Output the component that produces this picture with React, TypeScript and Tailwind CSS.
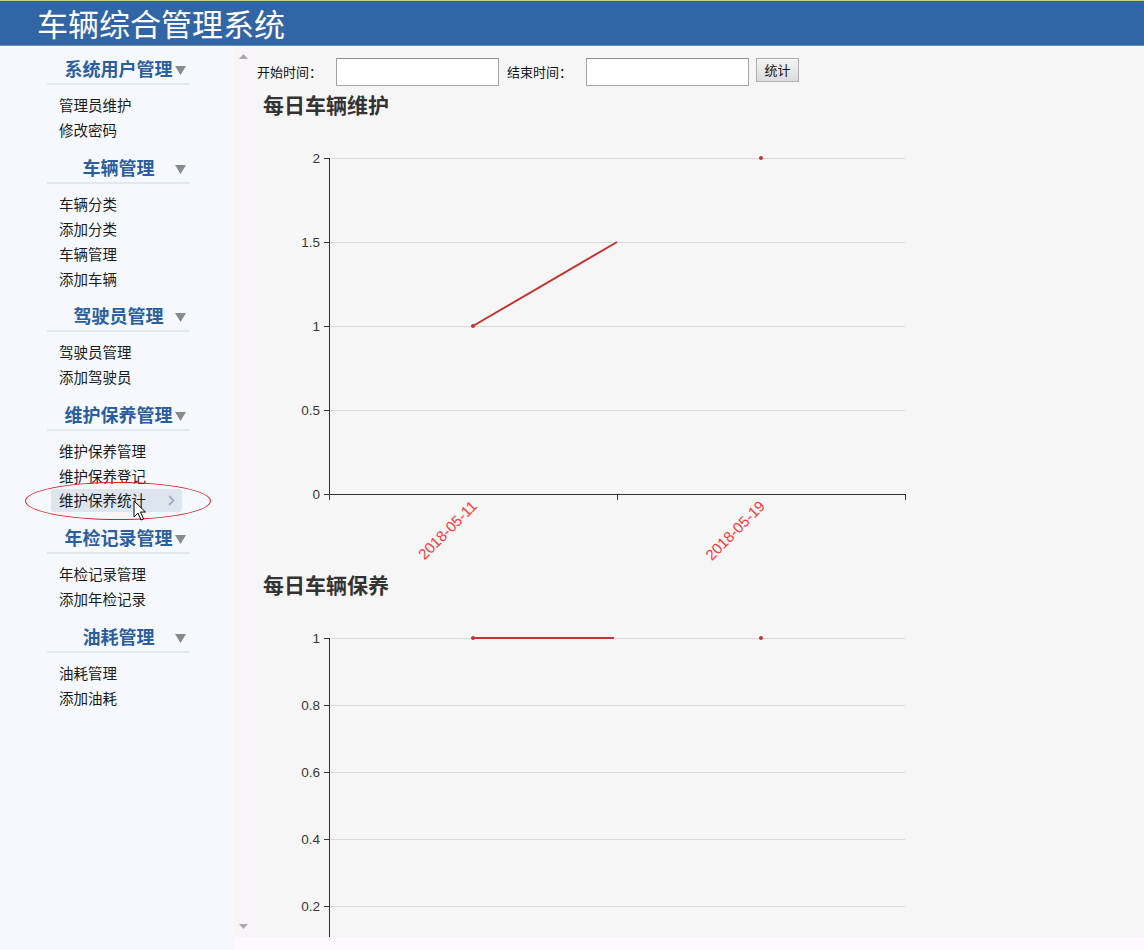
import React from "react";

const sections: { title: string; items: string[] }[] = [
  { title: "系统用户管理", items: ["管理员维护", "修改密码"] },
  { title: "车辆管理", items: ["车辆分类", "添加分类", "车辆管理", "添加车辆"] },
  { title: "驾驶员管理", items: ["驾驶员管理", "添加驾驶员"] },
  { title: "维护保养管理", items: ["维护保养管理", "维护保养登记", "维护保养统计"] },
  { title: "年检记录管理", items: ["年检记录管理", "添加年检记录"] },
  { title: "油耗管理", items: ["油耗管理", "添加油耗"] },
];

const ACTIVE = "维护保养统计";

function Sidebar() {
  return (
    <div className="relative w-[234px] shrink-0 bg-[#f5f9fe] pt-[7px]">
      {sections.map((s) => (
        <div key={s.title} className="ml-[47px] w-[143px] pb-[9.5px]">
          <div className="relative h-[32px] border-b-2 border-[#e1e8f0] text-center text-[18px] font-bold leading-[30px] text-[#2b5e9e]">
            {s.title}
            <svg className="absolute right-[4px] top-[13px]" width="11" height="9" viewBox="0 0 11 9">
              <path d="M0 0 H11 L5.5 9 Z" fill="#8a8a8a" />
            </svg>
          </div>
          <div className="pt-[7px]">
            {s.items.map((it) =>
              it === ACTIVE ? (
                <div key={it} className="flex h-[25px] items-center py-[1px] pl-[4px] pr-[8px]">
                  <div className="flex h-[23px] w-full items-center justify-between rounded-[3px] bg-[#dde5ef] pl-[8px] pr-[7px] text-[14.5px] text-[#1a1a1a]">
                    <span>{it}</span>
                    <svg width="7" height="11" viewBox="0 0 7 11">
                      <path d="M1 1 L5.5 5.5 L1 10" stroke="#9eadc2" strokeWidth="1.8" fill="none" />
                    </svg>
                  </div>
                </div>
              ) : (
                <div key={it} className="h-[25px] pl-[12px] text-[14.5px] leading-[25px] text-[#1a1a1a]">
                  {it}
                </div>
              )
            )}
          </div>
        </div>
      ))}
      {/* red annotation ellipse */}
      <div className="pointer-events-none absolute left-[25px] top-[436px] h-[38px] w-[186px] rounded-[50%] border border-[#e02020]" />
      {/* mouse cursor */}
      <svg className="absolute left-[133px] top-[454px]" width="14" height="22" viewBox="0 0 14 22">
        <path d="M1 1 L1 17 L5 13 L8 20 L10.5 19 L7.5 12 L12.5 12 Z" fill="#fff" stroke="#000" strokeWidth="1" strokeLinejoin="round" />
      </svg>
    </div>
  );
}

function YLabel({ y, label }: { y: number; label: string }) {
  return (
    <g>
      <line x1={71} y1={y + 0.5} x2={76} y2={y + 0.5} stroke="#333" strokeWidth={1} />
      <text x={67} y={y + 5} textAnchor="end" fontSize={13.5} fill="#383838" fontFamily="'Liberation Sans', Arial, sans-serif">
        {label}
      </text>
    </g>
  );
}

function Chart1() {
  const ys = [
    { y: 40, l: "2" },
    { y: 124, l: "1.5" },
    { y: 208, l: "1" },
    { y: 292, l: "0.5" },
    { y: 376, l: "0" },
  ];
  return (
    <svg width="700" height="452" viewBox="0 0 700 452" className="block">
      {ys.slice(0, 4).map((g) => (
        <line key={g.y} x1={76} y1={g.y + 0.5} x2={652} y2={g.y + 0.5} stroke="#dadada" strokeWidth={1} />
      ))}
      <line x1={76.5} y1={40} x2={76.5} y2={376} stroke="#333" strokeWidth={1} />
      <line x1={76} y1={376.5} x2={652} y2={376.5} stroke="#333" strokeWidth={1} />
      {[76, 364, 652].map((x) => (
        <line key={x} x1={x + 0.5} y1={376} x2={x + 0.5} y2={382} stroke="#333" strokeWidth={1} />
      ))}
      {ys.map((g) => (
        <YLabel key={g.l} y={g.y} label={g.l} />
      ))}
      <line x1={220} y1={208} x2={364} y2={124} stroke="#c23531" strokeWidth={2} />
      <circle cx={220} cy={208} r={2} fill="#c23531" />
      <circle cx={508} cy={40} r={2} fill="#c23531" />
      <text x={225} y={389} textAnchor="end" fontSize={15} fill="#ff3838" fontFamily="'Liberation Sans', Arial, sans-serif" transform="rotate(-45 225 389)">
        2018-05-11
      </text>
      <text x={513} y={389} textAnchor="end" fontSize={15} fill="#ff3838" fontFamily="'Liberation Sans', Arial, sans-serif" transform="rotate(-45 513 389)">
        2018-05-19
      </text>
    </svg>
  );
}

function Chart2() {
  const ys = [
    { y: 40, l: "1" },
    { y: 107, l: "0.8" },
    { y: 174, l: "0.6" },
    { y: 241, l: "0.4" },
    { y: 308, l: "0.2" },
  ];
  return (
    <svg width="700" height="452" viewBox="0 0 700 452" className="block">
      {ys.map((g) => (
        <line key={g.y} x1={76} y1={g.y + 0.5} x2={652} y2={g.y + 0.5} stroke="#dadada" strokeWidth={1} />
      ))}
      <line x1={76.5} y1={40} x2={76.5} y2={376} stroke="#333" strokeWidth={1} />
      <line x1={76} y1={376.5} x2={652} y2={376.5} stroke="#333" strokeWidth={1} />
      {ys.map((g) => (
        <YLabel key={g.l} y={g.y} label={g.l} />
      ))}
      <line x1={220} y1={40} x2={361} y2={40} stroke="#c23531" strokeWidth={2} />
      <circle cx={220} cy={40} r={2} fill="#c23531" />
      <circle cx={508} cy={40} r={2} fill="#c23531" />
    </svg>
  );
}

function Content() {
  return (
    <div className="flex min-w-0 flex-1 flex-col overflow-hidden bg-[#f6f6f6] pl-[4px] pt-[12px]">
      <div className="flex h-[28px] items-center text-[13px] text-[#111]">
        <span className="w-[79px]">开始时间：</span>
        <div className="h-[28px] w-[163px] border border-[#a5a5a5] border-t-[#8e8e8e] bg-white" />
        <span className="ml-[8px] w-[79px]">结束时间：</span>
        <div className="h-[28px] w-[163px] border border-[#a5a5a5] border-t-[#8e8e8e] bg-white" />
        <button className="mb-[4px] ml-[7px] h-[24px] w-[43px] border border-[#adadad] bg-gradient-to-b from-[#f4f4f4] to-[#dcdcdc] text-[13px] leading-[22px] text-[#111]">
          统计
        </button>
      </div>
      <div className="-ml-[4px] mt-[4px]">
        <div className="h-[28px] pl-[10px] text-[21px] font-bold leading-[28px] text-[#333]">每日车辆维护</div>
        <Chart1 />
        <div className="h-[28px] pl-[10px] text-[21px] font-bold leading-[28px] text-[#333]">每日车辆保养</div>
        <Chart2 />
      </div>
    </div>
  );
}

export default function App() {
  return (
    <div
      className="h-[950px] w-[1144px] overflow-hidden bg-[#f6f6f6]"
      style={{ fontFamily: "'Noto Sans CJK SC', 'Noto Sans', sans-serif" }}
    >
      <div className="h-[46px] border-t border-b border-t-[#c9cf8e] border-b-[#6a90c4] bg-[#3165a5] pl-[37px] text-[31px] leading-[44px] text-white">
        车辆综合管理系统
      </div>
      <div className="flex h-[904px]">
        <Sidebar />
        <div className="flex min-w-0 flex-1 flex-col">
          <div className="flex h-[891px]">
            <div className="flex w-[19px] shrink-0 flex-col items-center justify-between bg-[#f8f4f8] pb-[8px] pt-[8px]">
              <svg width="9" height="5" viewBox="0 0 9 5">
                <path d="M0 5 L4.5 0 L9 5 Z" fill="#a8a8a8" />
              </svg>
              <svg width="9" height="5" viewBox="0 0 9 5">
                <path d="M0 0 L9 0 L4.5 5 Z" fill="#a8a8a8" />
              </svg>
            </div>
            <Content />
          </div>
          <div className="h-[13px] bg-[#fdf8fd]" />
        </div>
      </div>
    </div>
  );
}
